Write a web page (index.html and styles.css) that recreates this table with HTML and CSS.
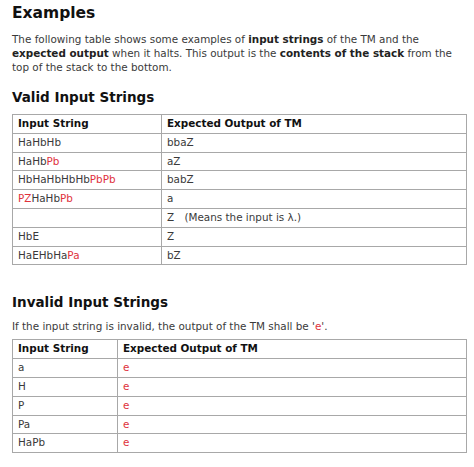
FILE: index.html
```html
<!DOCTYPE html>
<html>
<head>
<meta charset="utf-8">
<link rel="stylesheet" href="styles.css">
</head>
<body>
<div class="page">
  <h1 class="title">Examples</h1>
  <p class="text">The following table shows some examples of <b>input strings</b> of the TM and the<br><b>expected output</b> when it halts. This output is the <b>contents of the stack</b> from the<br>top of the stack to the bottom.</p>

  <h2 class="subtitle sub-valid">Valid Input Strings</h2>
  <table class="grid grid-valid">
    <tr><th class="c1">Input String</th><th>Expected Output of TM</th></tr>
    <tr><td>HaHbHb</td><td>bbaZ</td></tr>
    <tr><td>HaHb<span class="red">Pb</span></td><td>aZ</td></tr>
    <tr><td>HbHaHbHbHb<span class="red">PbPb</span></td><td>babZ</td></tr>
    <tr><td><span class="red">PZ</span>HaHb<span class="red">Pb</span></td><td>a</td></tr>
    <tr><td></td><td>Z <span class="note">(Means the input is λ.)</span></td></tr>
    <tr><td>HbE</td><td>Z</td></tr>
    <tr><td>HaEHbHa<span class="red">Pa</span></td><td>bZ</td></tr>
  </table>

  <h2 class="subtitle sub-invalid">Invalid Input Strings</h2>
  <p class="text text-invalid">If the input string is invalid, the output of the TM shall be '<span class="red">e</span>'.</p>
  <table class="grid grid-invalid">
    <tr><th class="c1">Input String</th><th>Expected Output of TM</th></tr>
    <tr><td>a</td><td class="red">e</td></tr>
    <tr><td>H</td><td class="red">e</td></tr>
    <tr><td>P</td><td class="red">e</td></tr>
    <tr><td>Pa</td><td class="red">e</td></tr>
    <tr><td>HaPb</td><td class="red">e</td></tr>
  </table>
</div>
</body>
</html>
```

FILE: styles.css
```css
html, body {
  margin: 0;
  padding: 0;
  background: #ffffff;
}

.page {
  padding: 0 7px 0 12px;
  font-family: "DejaVu Sans", Verdana, sans-serif;
  color: #3a3a3a;
  font-size: 10.4px;
}

.title {
  margin: 0;
  padding-top: 3px;
  font-size: 15.5px;
  line-height: 20px;
  color: #111111;
  font-weight: bold;
}

.text {
  margin: 9px 0 0 0;
  line-height: 14px;
}

.text b {
  color: #222222;
}

.subtitle {
  margin: 0;
  font-size: 13.5px;
  line-height: 18px;
  color: #111111;
  font-weight: bold;
}

.sub-valid {
  margin-top: 14px;
}

.sub-invalid {
  margin-top: 28px;
}

.text-invalid {
  margin-top: 8px;
}

.grid {
  width: 100%;
  border-collapse: collapse;
  border: 1px solid #9a9a9a;
}

.grid-valid {
  margin-top: 8px;
}

.grid-invalid {
  margin-top: 6px;
}

.grid th,
.grid td {
  border: 1px solid #a8a8a8;
  padding: 2px 5px;
  line-height: 13.8px;
  text-align: left;
  vertical-align: middle;
}

.grid th {
  font-weight: bold;
  color: #111111;
}

.grid-valid .c1 {
  width: 138px;
}

.grid-invalid .c1 {
  width: 94px;
}

.red {
  color: #e0323c;
}

.note {
  margin-left: 7px;
}
```
